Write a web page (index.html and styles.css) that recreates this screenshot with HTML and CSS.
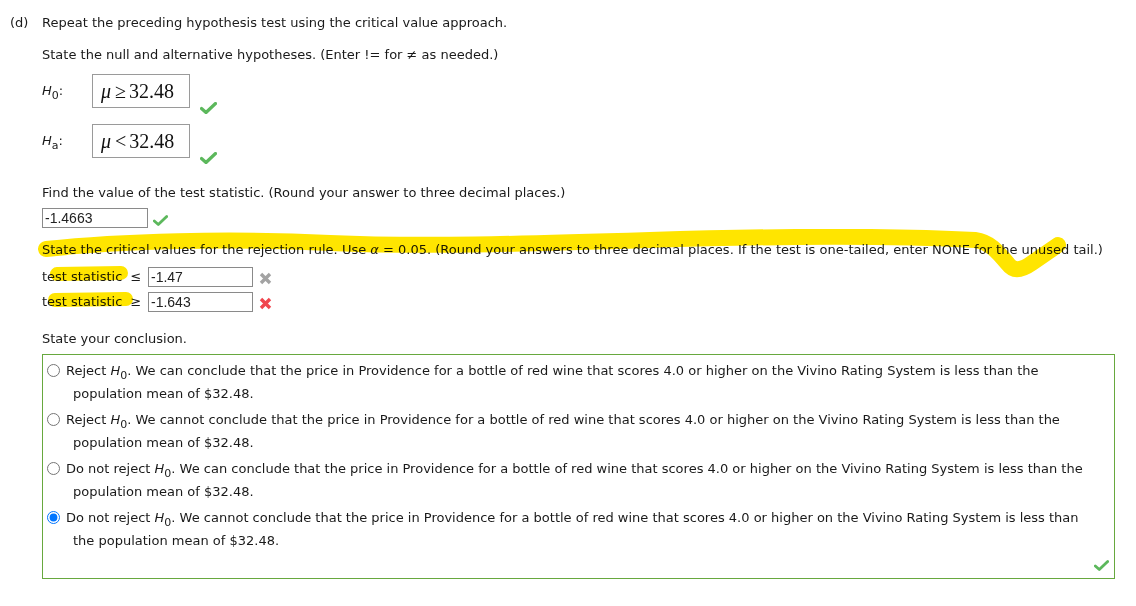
FILE: index.html
```html
<!DOCTYPE html>
<html>
<head>
<meta charset="utf-8">
<link rel="stylesheet" href="styles.css">
</head>
<body>
<div class="page">
  <div class="part">
    <div class="part-label">(d)</div>
    <div class="part-body">
      <p class="p-first">Repeat the preceding hypothesis test using the critical value approach.</p>
      <p class="p-hyp">State the null and alternative hypotheses. (Enter != for ≠ as needed.)</p>

      <div class="hyp-row hyp-first">
        <div class="hyp-label"><i>H</i><sub>0</sub>:</div>
        <div class="math-box"><i class="mu">μ</i><span class="rel">≥</span>32.48</div>
        <svg class="check check-hyp" viewBox="0 0 17 12"><path d="M1.5 6.5 L6 10.5 L15.5 1.5" /></svg>
      </div>
      <div class="hyp-row hyp-second">
        <div class="hyp-label"><i>H</i><sub>a</sub>:</div>
        <div class="math-box"><i class="mu">μ</i><span class="rel">&lt;</span>32.48</div>
        <svg class="check check-hyp" viewBox="0 0 17 12"><path d="M1.5 6.5 L6 10.5 L15.5 1.5" /></svg>
      </div>

      <p class="p-find">Find the value of the test statistic. (Round your answer to three decimal places.)</p>
      <div class="ans-row">
        <div class="txt-input w106">-1.4663</div>
        <svg class="check check-small" viewBox="0 0 17 12"><path d="M1.5 6.5 L6 10.5 L15.5 1.5" /></svg>
      </div>

      <p class="p-crit">State the critical values for the rejection rule. Use <i class="alpha">α</i> = 0.05. (Round your answers to three decimal places. If the test is one-tailed, enter NONE for the unused tail.)</p>
      <div class="crit-row crit-first">
        <span class="crit-label">test statistic&nbsp; ≤</span>
        <div class="txt-input w105">-1.47</div>
        <svg class="xmark xmark-gray" viewBox="0 0 13 13"><path d="M2 2 L11 11 M11 2 L2 11" /></svg>
      </div>
      <div class="crit-row crit-second">
        <span class="crit-label">test statistic&nbsp; ≥</span>
        <div class="txt-input w105">-1.643</div>
        <svg class="xmark xmark-red" viewBox="0 0 13 13"><path d="M2 2 L11 11 M11 2 L2 11" /></svg>
      </div>

      <p class="p-concl">State your conclusion.</p>
      <div class="choices">
        <label class="choice">
          <input type="radio" name="c">
          <span class="choice-text">Reject <i>H</i><sub>0</sub>. We can conclude that the price in Providence for a bottle of red wine that scores 4.0 or higher on the Vivino Rating System is less than the<br>population mean of $32.48.</span>
        </label>
        <label class="choice">
          <input type="radio" name="c">
          <span class="choice-text">Reject <i>H</i><sub>0</sub>. We cannot conclude that the price in Providence for a bottle of red wine that scores 4.0 or higher on the Vivino Rating System is less than the<br>population mean of $32.48.</span>
        </label>
        <label class="choice">
          <input type="radio" name="c">
          <span class="choice-text">Do not reject <i>H</i><sub>0</sub>. We can conclude that the price in Providence for a bottle of red wine that scores 4.0 or higher on the Vivino Rating System is less than the<br>population mean of $32.48.</span>
        </label>
        <label class="choice">
          <input type="radio" name="c" checked>
          <span class="choice-text">Do not reject <i>H</i><sub>0</sub>. We cannot conclude that the price in Providence for a bottle of red wine that scores 4.0 or higher on the Vivino Rating System is less than<br>the population mean of $32.48.</span>
        </label>
        <div class="choices-foot">
          <svg class="check check-small" viewBox="0 0 17 12"><path d="M1.5 6.5 L6 10.5 L15.5 1.5" /></svg>
        </div>
      </div>
    </div>
  </div>

  <svg class="highlights" viewBox="0 0 1136 606" width="1136" height="606">
    <path class="hl-big" d="M46 249 C 120 241, 230 238, 330 243 C 420 247, 520 244, 650 240 C 780 236, 900 236, 975 240 C 990 242, 998 252, 1008 264 C 1014 272, 1022 270, 1032 263 L 1058 245" />
    <path class="hl-small" d="M57 274 L121 273" />
    <path class="hl-small" d="M55 300 L126 299" />
  </svg>
</div>
</body>
</html>
```

FILE: styles.css
```css
html, body {
  margin: 0;
  padding: 0;
  background: #ffffff;
}

.page {
  position: relative;
  width: 1136px;
  height: 606px;
  overflow: hidden;
  font-family: "DejaVu Sans", Verdana, sans-serif;
  font-size: 13px;
  line-height: 16px;
  color: #1a1a1a;
}

.part {
  display: flex;
  padding-top: 14px;
}

.part-label {
  width: 42px;
  padding-left: 10px;
  padding-top: 1px;
  box-sizing: border-box;
}

.part-body {
  flex: 1;
}

p {
  margin: 0;
}

.p-first { margin-top: 1px; }
.p-hyp { margin-top: 16px; }

sub {
  font-size: 11px;
  line-height: 0;
  vertical-align: -4px;
  font-style: normal;
}

.hyp-row {
  display: flex;
  align-items: center;
  position: relative;
}

.hyp-first { margin-top: 11px; }
.hyp-second { margin-top: 16px; }

.hyp-label {
  width: 50px;
}

.math-box {
  width: 98px;
  height: 34px;
  box-sizing: border-box;
  border: 1px solid #9a9a9a;
  font-family: "Liberation Serif", "DejaVu Serif", serif;
  font-size: 20px;
  line-height: 32px;
  padding-left: 8px;
  color: #111;
}

.mu {
  font-style: italic;
}

.rel {
  margin: 0 3px 0 4px;
}

.check {
  width: 17px;
  height: 12px;
  fill: none;
  stroke: #5cb85c;
  stroke-width: 3.2;
  stroke-linecap: round;
  stroke-linejoin: round;
}

.check-hyp {
  align-self: flex-end;
  margin-left: 10px;
  margin-bottom: -6px;
}

.check-small {
  width: 15px;
  height: 11px;
}

.p-find { margin-top: 27px; }

.ans-row {
  display: flex;
  align-items: center;
  margin-top: 7px;
}

.ans-row .check {
  margin-left: 5px;
  margin-top: 4px;
}

.txt-input {
  height: 20px;
  box-sizing: border-box;
  border: 1px solid #8a8a8a;
  font-family: "Liberation Sans", Arial, sans-serif;
  font-size: 14px;
  line-height: 18px;
  padding-left: 2px;
  color: #222;
}

.w106 { width: 106px; }
.w105 { width: 105px; }

.p-crit { margin-top: 14px; }

.crit-row {
  display: flex;
  align-items: center;
}

.crit-first { margin-top: 9px; }
.crit-second { margin-top: 5px; }

.crit-label {
  width: 106px;
}

.xmark {
  width: 13px;
  height: 13px;
  margin-left: 6px;
  margin-top: 2px;
  fill: none;
  stroke-width: 3.4;
  stroke-linecap: butt;
}

.xmark-gray { stroke: #a3a3a3; }
.xmark-red { stroke: #f0464e; }

.p-concl { margin-top: 19px; }

.choices {
  margin-top: 7px;
  width: 1073px;
  height: 225px;
  box-sizing: border-box;
  border: 1px solid #67a83e;
  padding: 4px 0 0 3px;
  display: flex;
  flex-direction: column;
}

.choice {
  display: flex;
  align-items: flex-start;
  line-height: 23px;
  margin-bottom: 3px;
}

.choice input {
  margin: 5px 0 0 1px;
  width: 13px;
  height: 13px;
}

.choice-text {
  padding-left: 13px;
  text-indent: -7px;
}

.choices-foot {
  margin-top: auto;
  display: flex;
  justify-content: flex-end;
  padding: 0 5px 7px 0;
}

.highlights {
  position: absolute;
  left: 0;
  top: 0;
  pointer-events: none;
  mix-blend-mode: multiply;
}

.hl-big, .hl-small {
  fill: none;
  stroke: #ffe500;
  stroke-linecap: round;
  stroke-linejoin: round;
}

.hl-big { stroke-width: 16; }
.hl-small { stroke-width: 14; }
```
